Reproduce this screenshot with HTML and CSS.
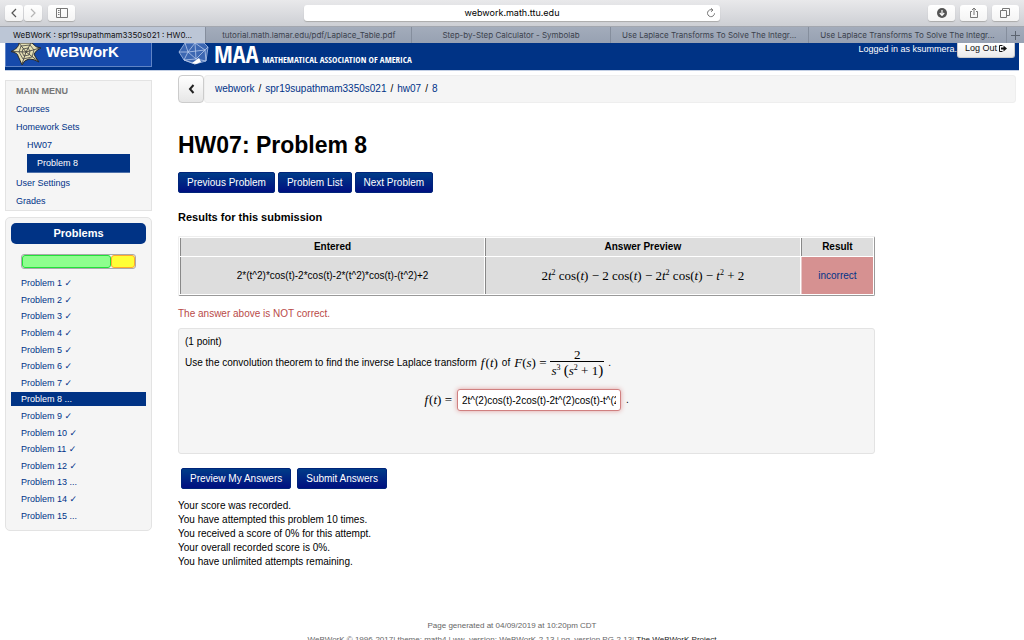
FILE: index.html
```html
<!DOCTYPE html>
<html lang="en">
<head>
  <meta charset="UTF-8">
  <meta name="viewport" content="width=device-width, initial-scale=1.0">
  <title>WeBWorK : spr19supathmam3350s021 : HW07 : 8</title>
  <link rel="stylesheet" href="styles.css">
</head>
<body>
  <div class="browser">
    <div class="toolbar">
      <div class="tools">
        <div class="pair">
          <button type="button" class="tool" aria-label="Back"><svg width="8" height="10" viewBox="0 0 8 10"><path d="M6 1 2 5l4 4" fill="none" stroke="#555" stroke-width="1.2"/></svg></button>
          <button type="button" class="tool" aria-label="Forward"><svg width="8" height="10" viewBox="0 0 8 10"><path d="m2 1 4 4-4 4" fill="none" stroke="#b5b5b5" stroke-width="1.2"/></svg></button>
        </div>
        <button type="button" class="tool wide" aria-label="Sidebar"><svg width="12" height="10" viewBox="0 0 12 10"><path d="M.5.5h11v9H.5zM4.5.5v9M2 2.500h1.500M2 4.500h1.500M2 6.500h1.500" fill="none" stroke="#777"/></svg></button>
      </div>
      <div class="address">
        <input type="text" value="webwork.math.ttu.edu" aria-label="Address">
        <button type="button" class="reload" aria-label="Reload"><svg width="10" height="10" viewBox="0 0 10 10"><path d="M6.500 2A3.500 3.500 0 1 0 8.500 5.300M5 .3l2 1.800-2 1.600" fill="none" stroke="#777"/></svg></button>
      </div>
      <div class="tools right">
        <button type="button" class="tool wide" aria-label="Downloads"><svg width="10" height="10" viewBox="0 0 10 10"><circle cx="5" cy="5" r="5" fill="#555"/><path d="M5 2v5M2.800 5 5 7.300 7.200 5" fill="none" stroke="#fff" stroke-width="1.200"/></svg></button>
        <button type="button" class="tool wide" aria-label="Share"><svg width="10" height="12" viewBox="0 0 10 12"><path d="M3 4.500H1.500v6h7v-6H7M5 8V1M3 3l2-2 2 2" fill="none" stroke="#777"/></svg></button>
        <button type="button" class="tool wide" aria-label="Tabs"><svg width="11" height="10" viewBox="0 0 11 10"><path d="M.5 2.500h6v7h-6zM2.500 2.500v-2h7v7h-3" fill="none" stroke="#777"/></svg></button>
      </div>
    </div>
    <div class="tabs">
      <button type="button" class="tab long active">WeBWorK : spr19supathmam3350s021 : HW0...</button>
      <button type="button" class="tab long">tutorial.math.lamar.edu/pdf/Laplace_Table.pdf</button>
      <button type="button" class="tab">Step-by-Step Calculator - Symbolab</button>
      <button type="button" class="tab">Use Laplace Transforms To Solve The Integr...</button>
      <button type="button" class="tab">Use Laplace Transforms To Solve The Integr...</button>
      <button type="button" class="tab new" aria-label="New tab"><svg width="9" height="9" viewBox="0 0 9 9"><path d="M4.500 0v9M0 4.500h9" stroke="#5c6470"/></svg></button>
    </div>
  </div>

  <div class="page">
    <header class="masthead">
      <a class="webwork-logo" href="#">
        <svg width="32" height="23" viewBox="0 0 32 23">
          <path d="M9 0Q9 5 1 8.500 8 10 8 13 10 17 12 22 14 17 19 16 24 16 29 19 25 14 24 11 26 7 31 5 26 5 22 0z" fill="#e4dfb4" stroke="#2a2a2a"/>
          <path d="M16 9 9 0M16 9 2 8.500M16 9 12 21M16 9l12 9M16 9l14-4M16 9 21 0" stroke="#333" stroke-width=".8"/>
          <path d="m11 3-2 6 4 7 9-2 2-7-4-5zM13 6l-1 3 2 4 5-1 1-4-2-3z" fill="none" stroke="#444" stroke-width=".8"/>
        </svg>
        <span>WeBWorK</span>
      </a>
      <a class="maa-logo" href="#">
        <svg width="32" height="22" viewBox="0 0 32 22">
          <path d="M7 0 1 9l5 8 11 4 11-3 2-14-4-4z" fill="#3c67b2" stroke="#8fa9d8"/>
          <path d="M1 9h9l7-9 10 7M10 9 6 17l11 4M10 9l-3-9M10 9l8 7 9-9 1 11M10 9l17-2M18 16l10 2M6 17l12-1M27 7l3-3M17 0l1 16" fill="none" stroke="#b5c8ea" stroke-width=".8"/>
          <path d="m14 20 7-5 2 4-5 2z" fill="#fff"/>
        </svg>
        <strong>MAA</strong>
        <span>MATHEMATICAL ASSOCIATION OF AMERICA</span>
      </a>
      <div class="login">
        <span>Logged in as ksummera.</span>
        <button type="button" class="logout">Log Out <svg width="8" height="7" viewBox="0 0 8 7"><path d="M3.500.5h-3v6h3" fill="none" stroke="#111"/><path d="M2 2.500h2.500V.5L8 3.500l-3.500 3v-2H2z" fill="#111"/></svg></button>
      </div>
    </header>

    <div class="columns">
      <aside class="sidebar">
        <nav class="well menu">
          <h2>Main Menu</h2>
          <ul>
            <li><a href="#">Courses</a></li>
            <li><a href="#">Homework Sets</a>
              <ul>
                <li><a href="#">HW07</a>
                  <ul>
                    <li><a class="current" href="#">Problem 8</a></li>
                  </ul>
                </li>
              </ul>
            </li>
            <li><a href="#">User Settings</a></li>
            <li><a href="#">Grades</a></li>
          </ul>
        </nav>
        <nav class="well problems">
          <h2>Problems</h2>
          <div class="progress"><div class="done"></div><div class="pending"></div></div>
          <ul>
            <li><a href="#">Problem 1 <i>✓</i></a></li>
            <li><a href="#">Problem 2 <i>✓</i></a></li>
            <li><a href="#">Problem 3 <i>✓</i></a></li>
            <li><a href="#">Problem 4 <i>✓</i></a></li>
            <li><a href="#">Problem 5 <i>✓</i></a></li>
            <li><a href="#">Problem 6 <i>✓</i></a></li>
            <li><a href="#">Problem 7 <i>✓</i></a></li>
            <li><a class="current" href="#">Problem 8 ...</a></li>
            <li><a href="#">Problem 9 <i>✓</i></a></li>
            <li><a href="#">Problem 10 <i>✓</i></a></li>
            <li><a href="#">Problem 11 <i>✓</i></a></li>
            <li><a href="#">Problem 12 <i>✓</i></a></li>
            <li><a href="#">Problem 13 ...</a></li>
            <li><a href="#">Problem 14 <i>✓</i></a></li>
            <li><a href="#">Problem 15 ...</a></li>
          </ul>
        </nav>
      </aside>

      <main class="content">
        <div class="crumb-row">
          <button type="button" class="back" aria-label="Up"><svg width="7" height="10" viewBox="0 0 7 10"><path d="M5.500 1 2 5l3.500 4" fill="none" stroke="#222" stroke-width="2"/></svg></button>
          <div class="crumbs">
            <a href="#">webwork</a><span>/</span><a href="#">spr19supathmam3350s021</a><span>/</span><a href="#">hw07</a><span>/</span><a href="#">8</a>
          </div>
        </div>

        <h1>HW07: Problem 8</h1>
        <div class="buttons">
          <button type="button" class="btn">Previous Problem</button>
          <button type="button" class="btn">Problem List</button>
          <button type="button" class="btn">Next Problem</button>
        </div>

        <h3>Results for this submission</h3>
        <table class="results">
          <thead>
            <tr><th class="entered">Entered</th><th class="preview">Answer Preview</th><th>Result</th></tr>
          </thead>
          <tbody>
            <tr>
              <td>2*(t^2)*cos(t)-2*cos(t)-2*(t^2)*cos(t)-(t^2)+2</td>
              <td class="math">2<i>t</i><sup>2</sup> cos(<i>t</i>) − 2 cos(<i>t</i>) − 2<i>t</i><sup>2</sup> cos(<i>t</i>) − <i>t</i><sup>2</sup> + 2</td>
              <td class="wrong"><a href="#">incorrect</a></td>
            </tr>
          </tbody>
        </table>
        <p class="error">The answer above is NOT correct.</p>

        <form>
          <div class="well problem">
            <p>(1 point)</p>
            <div class="question">
              <span>Use the convolution theorem to find the inverse Laplace transform</span>
              <span class="math"><i>f</i>&hairsp;(<i>t</i>)</span>
              <span>of</span>
              <span class="math"><i>F</i>(<i>s</i>) =</span>
              <span class="math fraction">
                <span>2</span>
                <span class="under"><i>s</i><sup>3</sup> <b>(</b><i>s</i><sup>2</sup> + 1<b>)</b></span>
              </span>
              <span>.</span>
            </div>
            <div class="answer">
              <label class="math" for="answer"><i>f</i>&hairsp;(<i>t</i>) =</label>
              <input type="text" id="answer" value="2t^(2)cos(t)-2cos(t)-2t^(2)cos(t)-t^(2)+2">
              <span>.</span>
            </div>
          </div>
          <div class="buttons submit">
            <button type="button" class="btn">Preview My Answers</button>
            <button type="button" class="btn">Submit Answers</button>
          </div>
        </form>

        <p class="score">
          Your score was recorded.<br>
          You have attempted this problem 10 times.<br>
          You received a score of 0% for this attempt.<br>
          Your overall recorded score is 0%.<br>
          You have unlimited attempts remaining.
        </p>
      </main>
    </div>

    <footer>
      <p>Page generated at 04/09/2019 at 10:20pm CDT</p>
      <p>WeBWorK © 1996-2017| theme: math4 | ww_version: WeBWorK-2.13 | pg_version PG-2.13| <a href="#">The WeBWorK Project</a></p>
    </footer>
  </div>
</body>
</html>
```
FILE: styles.css
```css
* {
  margin: 0;
  padding: 0;
  box-sizing: border-box;
}
body {
  height: 100vh;
  overflow: hidden;
  background: #fff;
  color: #000;
  font-family: "Liberation Sans", Arial, sans-serif;
  font-size: 10px;
  line-height: 14px;
}
button, input {
  font: inherit;
  color: inherit;
}
button {
  white-space: nowrap;
}
svg {
  display: block;
  flex: none;
}
ul {
  list-style: none;
}
a {
  color: #003388;
  text-decoration: none;
}

/* browser bars */
.browser {
  font-family: Inter, sans-serif;
}
.toolbar {
  display: grid;
  grid-template-columns: 1fr 41% 1fr;
  align-items: center;
  height: 27px;
  padding: 0 5px;
  background: linear-gradient(#e9e9eb, #cdcfd4);
  border-bottom: 1px solid #a3a7af;
}
.tools {
  display: flex;
  gap: 6px;
}
.tools.right {
  justify-content: flex-end;
  gap: 5px;
}
.pair {
  display: flex;
  gap: 1px;
}
.tool {
  display: flex;
  align-items: center;
  justify-content: center;
  width: 18px;
  height: 16px;
  background: linear-gradient(#fff, #f4f4f4);
  border: 0;
  border-radius: 3px;
  box-shadow: 0 1px 1px #aaa;
}
.tool.wide {
  width: 27px;
}
.address {
  display: flex;
  align-items: center;
  height: 16px;
  padding-right: 4px;
  background: #fff;
  border-radius: 3px;
  box-shadow: 0 1px 1px #aaa;
}
.address input {
  flex: 1;
  min-width: 0;
  padding-left: 14px;
  background: none;
  border: 0;
  text-align: center;
  font-size: 9px;
}
.reload {
  background: none;
  border: 0;
}
.tabs {
  display: flex;
  height: 16px;
}
.tab {
  flex: 198 1 0;
  background: linear-gradient(#a3acbb, #97a1b2);
  border: 0;
  border-right: 1px solid #858e9d;
  color: #3b424d;
  font-size: 8px;
}
.tab.long {
  flex-grow: 206;
}
.tab.active {
  background: #bcc6d6;
  color: #111;
}
.tab.new {
  display: flex;
  flex: 0 0 17px;
  align-items: center;
  justify-content: center;
  border: 0;
}

/* masthead */
.page {
  padding: 0 5px;
}
.masthead {
  display: flex;
  align-items: flex-start;
  height: 28px;
  background: #003385;
  border-bottom: 1px solid #c3cfe4;
}
.webwork-logo {
  display: flex;
  gap: 4px;
  width: 147px;
  height: 24px;
  padding-left: 4px;
  background: #164aab;
  border: 1px solid #5f84c6;
  border-top: 0;
  color: #fff;
  font-size: 15px;
  font-weight: bold;
  line-height: 17px;
}
.maa-logo {
  display: flex;
  align-items: flex-end;
  margin: 0 auto 0 26px;
  color: #fff;
  font-family: "Open Sans Condensed", "Liberation Sans Narrow", sans-serif;
  font-weight: bold;
  white-space: nowrap;
}
.maa-logo strong {
  margin: 0 4px;
  font-size: 24px;
  line-height: 22px;
}
.maa-logo span {
  font-size: 9px;
  line-height: 10px;
}
.login {
  display: flex;
  margin-right: 4px;
  color: #fff;
  font-size: 9px;
  line-height: 12px;
}
.logout {
  display: flex;
  align-items: center;
  gap: 2px;
  height: 15px;
  padding: 0 7px 4px;
  background: linear-gradient(#fff, #eaeaea);
  border: 1px solid #ccc;
  border-top: 0;
  border-radius: 0 0 3px 3px;
  color: #111;
}

/* sidebar */
.columns {
  display: grid;
  grid-template-columns: 147px 1fr;
  gap: 26px;
  padding-right: 3px;
}
.well {
  background: #f5f5f5;
  border: 1px solid #e3e3e3;
}
.sidebar {
  display: flex;
  flex-direction: column;
  gap: 6px;
  padding-top: 9px;
  font-size: 9px;
}
.menu {
  padding: 1px 10px 0;
  line-height: 18px;
}
.menu h2 {
  color: #777;
  font-size: 9px;
  text-transform: uppercase;
}
.menu a {
  display: block;
}
.menu ul ul {
  padding-bottom: 1px;
  margin-left: 11px;
}
.menu ul ul ul {
  margin: 0 11px 0 0;
  padding: 0;
}
.menu .current {
  padding-left: 10px;
  border-bottom: 1px solid #4d70aa;
}
.current {
  background: #003385;
  color: #fff;
}
.problems {
  padding: 5px 5px 6px;
  border-radius: 5px;
}
.problems h2 {
  background: #003385;
  border-radius: 5px;
  color: #fff;
  font-size: 11px;
  line-height: 21px;
  text-align: center;
}
.progress {
  display: flex;
  height: 15px;
  margin: 10px 10px 6px;
  border: 1px solid #aaa;
  border-radius: 3px;
}
.done {
  flex: 4;
  background: #8eff8e;
  border: 1px solid #22e03a;
  border-radius: 3px;
}
.pending {
  flex: 1;
  background: #ffff36;
  border: 1px solid #ffa92e;
  border-radius: 3px;
}
.problems ul {
  display: grid;
  align-items: center;
  height: 249px;
}
.problems li a {
  display: block;
  padding-left: 10px;
}
.problems i {
  font-family: "DejaVu Sans", sans-serif;
  font-weight: bold;
  font-style: normal;
}

/* content */
.content {
  padding-top: 4px;
}
.crumb-row {
  display: flex;
}
.back {
  display: flex;
  align-items: center;
  justify-content: center;
  width: 26px;
  height: 28px;
  background: linear-gradient(#fff, #e6e6e6);
  border: 1px solid #ccc;
  border-radius: 4px;
}
.crumbs {
  display: flex;
  flex: 1;
  align-items: center;
  gap: 4px;
  padding-left: 10px;
  background: #f5f5f5;
  border: 1px solid #eee;
  border-radius: 3px;
}
h1 {
  margin: 28px 0 12px;
  font-size: 23px;
  line-height: 29px;
}
.buttons {
  display: flex;
  gap: 3px;
}
.btn {
  height: 21px;
  padding: 0 8px;
  background: linear-gradient(#003c88, #000f80);
  border: 1px solid #00247a;
  border-radius: 2px;
  color: #fff;
}
h3 {
  margin: 17px 0 12px;
  font-size: 11px;
  line-height: 14px;
}
.results {
  width: 83.2%;
  border: 1px solid #bbb;
  border-color: #eee #999 #999 #eee;
  border-radius: 2px;
  border-spacing: 1px;
  table-layout: fixed;
  text-align: center;
}
.results th, .results td {
  background: #ddd;
  border-left: 1px solid #888;
}
.results th {
  height: 18px;
}
.results td {
  height: 37px;
}
.results .entered {
  width: 44%;
}
.results .preview {
  width: 45.5%;
}
.results .wrong {
  background: #d69191;
  border-color: #e8c8c8;
}
.math {
  font-family: "Liberation Serif", "Times New Roman", serif;
  font-size: 13px;
  white-space: nowrap;
}
.math sup {
  font-size: 8px;
  line-height: 0;
}
.error {
  margin: 11px 0 7px;
  color: #b94a48;
}
.problem {
  width: 83.2%;
  min-height: 126px;
  padding: 6px;
  border-color: #e3e3e3;
  border-radius: 3px;
}
.question {
  display: flex;
  align-items: center;
  gap: 4px;
}
.fraction {
  display: flex;
  flex-direction: column;
  text-align: center;
  line-height: 12px;
}
.under {
  padding: 2px 1px 0;
  border-top: 1px solid #000;
}
.under b {
  font-size: 15px;
  font-weight: normal;
}
.answer {
  display: flex;
  align-items: center;
  justify-content: center;
  gap: 5px;
  margin-top: 12px;
}
.answer input {
  width: 164px;
  height: 22px;
  padding: 0 4px;
  background: #fff;
  border: 1px solid #d08080;
  border-radius: 3px;
  box-shadow: 0 0 5px #e0a0a0;
}
.submit {
  gap: 6px;
  margin: 14px 3px 10px;
}
footer {
  margin-top: 50px;
  color: #666;
  font-size: 8px;
  text-align: center;
}
footer a {
  color: #222;
}
```
